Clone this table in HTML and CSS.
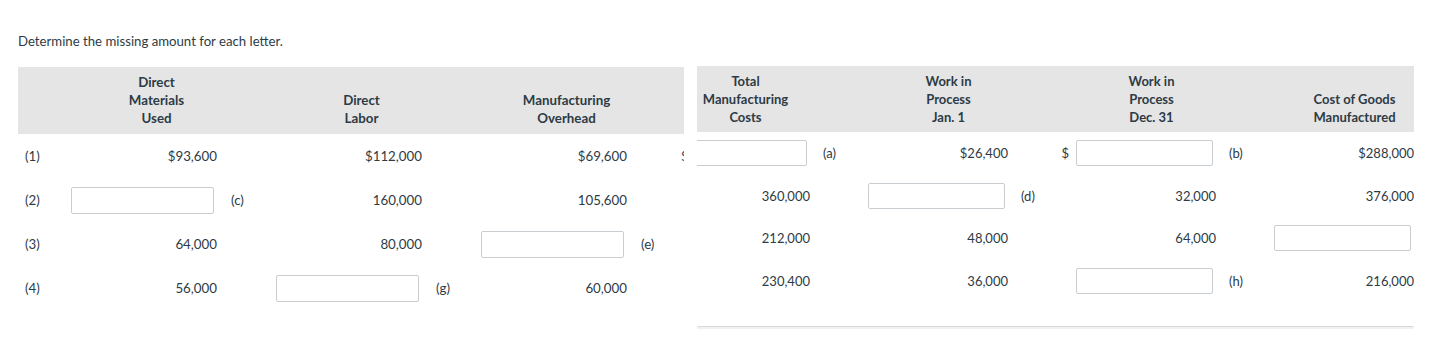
FILE: index.html
```html
<!DOCTYPE html>
<html lang="en">
<head>
<meta charset="utf-8">
<title>Missing amounts</title>
<link rel="stylesheet" href="styles.css">
</head>
<body>
<div class="page">
  <p class="prompt">Determine the missing amount for each letter.</p>
  <div class="panels">
    <div class="panel panel-left">
      <div class="head head-left">
        <div></div>
        <div class="th">Direct<br>Materials<br>Used</div>
        <div class="th">Direct<br>Labor</div>
        <div class="th">Manufacturing<br>Overhead</div>
        <div></div>
      </div>
      <div class="body body-left">
        <div class="lbl">(1)</div><div class="val">$93,600</div><div class="let"></div><div class="val">$112,000</div><div class="let"></div><div class="val">$69,600</div><div class="let"></div><div class="cut">$</div>
        <div class="lbl">(2)</div><div class="val"><span class="inp"></span></div><div class="let">(c)</div><div class="val">160,000</div><div class="let"></div><div class="val">105,600</div><div class="let"></div><div class="cut"></div>
        <div class="lbl">(3)</div><div class="val">64,000</div><div class="let"></div><div class="val">80,000</div><div class="let"></div><div class="val"><span class="inp"></span></div><div class="let">(e)</div><div class="cut"></div>
        <div class="lbl">(4)</div><div class="val">56,000</div><div class="let"></div><div class="val"><span class="inp"></span></div><div class="let">(g)</div><div class="val">60,000</div><div class="let"></div><div class="cut"></div>
      </div>
    </div>
    <div class="panel panel-right">
      <div class="scroller">
        <div class="head head-right">
          <div class="th">Total<br>Manufacturing<br>Costs</div>
          <div class="th">Work in<br>Process<br>Jan. 1</div>
          <div class="th">Work in<br>Process<br>Dec. 31</div>
          <div></div>
          <div class="th">Cost of Goods<br>Manufactured</div>
        </div>
        <div class="body body-right">
          <div class="val"><span class="inp inp-r"></span></div><div class="let">(a)</div><div class="val">$26,400</div><div class="let"></div><div class="val"><span class="dollar">$</span><span class="inp inp-r"></span></div><div class="let">(b)</div><div class="val">$288,000</div>
          <div class="val">360,000</div><div class="let"></div><div class="val"><span class="inp inp-r"></span></div><div class="let">(d)</div><div class="val">32,000</div><div class="let"></div><div class="val">376,000</div>
          <div class="val">212,000</div><div class="let"></div><div class="val">48,000</div><div class="let"></div><div class="val">64,000</div><div class="let"></div><div class="val"><span class="inp inp-r"></span></div>
          <div class="val">230,400</div><div class="let"></div><div class="val">36,000</div><div class="let"></div><div class="val"><span class="inp inp-r"></span></div><div class="let">(h)</div><div class="val">216,000</div>
        </div>
      </div>
      <div class="track"></div>
    </div>
  </div>
</div>
</body>
</html>
```

FILE: styles.css
```css
html, body {
  margin: 0;
  padding: 0;
  background: #ffffff;
}

body {
  font-family: Lato, "Noto Sans", "Liberation Sans", sans-serif;
  font-size: 13px;
  color: #2d3b45;
}

.page {
  padding: 32px 0 0 18px;
}

.prompt {
  margin: 0;
  font-size: 13.2px;
  line-height: 18px;
  height: 18px;
}

.panels {
  display: flex;
  align-items: flex-start;
  margin-top: 16px;
}

.panel {
  overflow: hidden;
}

.panel-left {
  width: 666px;
  padding-top: 1px;
  font-size: 13.3px;
}

.panel-right {
  width: 717px;
  margin-left: 13px;
}

.scroller {
  width: 770px;
  margin-left: -53px;
}

.head {
  display: grid;
  align-items: end;
  background: #e5e5e5;
}

.th {
  font-weight: 700;
  text-align: center;
}

.head-left {
  grid-template-columns: 36px 205px 205px 205px 1fr;
  height: 67px;
  padding: 7px 0 7.5px;
  box-sizing: border-box;
  line-height: 17.8px;
}

.head-right {
  grid-template-columns: 203px 203px 203px 42px 119px;
  height: 66px;
  padding: 6px 0;
  box-sizing: border-box;
  line-height: 18px;
}

.body {
  display: grid;
  align-items: center;
  line-height: 18px;
}

.body-left {
  grid-template-columns: 46px 153px 50px 155px 50px 155px 50px 1fr;
  grid-auto-rows: 44px;
}

.body-right {
  grid-template-columns: 166px 50px 148px 50px 158px 50px 148px;
  grid-auto-rows: 42.5px;
}

.lbl {
  padding-left: 7px;
}

.val {
  display: flex;
  justify-content: flex-end;
  align-items: center;
  white-space: nowrap;
}

.let {
  padding-left: 14px;
  white-space: nowrap;
}

.body-right .let {
  padding-left: 13px;
}

.cut {
  padding-left: 4px;
}

.inp {
  display: block;
  width: 143px;
  height: 27px;
  box-sizing: border-box;
  border: 1px solid #c7cdd1;
  border-radius: 2px;
  background: #ffffff;
  margin-right: 3px;
}

.inp-r {
  width: 137px;
  height: 26px;
  margin-right: 3.5px;
}

.dollar {
  margin-right: 6.5px;
}

.track {
  margin-top: 24px;
  height: 2px;
  border-top: 1px solid #d9d9d9;
  background: #f1f1f1;
  border-radius: 2px;
}
```
